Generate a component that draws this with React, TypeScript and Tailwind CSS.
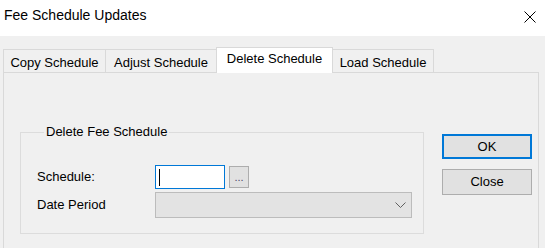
import React from "react";

const tabs = [
  { label: "Copy Schedule", w: "w-[103px]", border: "border-l border-t border-r" },
  { label: "Adjust Schedule", w: "w-[110px]", border: "border-t" },
  { label: "Delete Schedule", w: "w-[117px]", border: "", active: true },
  { label: "Load Schedule", w: "w-[101px]", border: "border-t border-r" },
];

export default function App() {
  return (
    <div className="w-[545px] h-[248px] overflow-hidden bg-[#f0f0f0] font-['Liberation_Sans',Arial,sans-serif] text-[13px] text-black">
      {/* title bar */}
      <div className="h-9 bg-white flex items-start justify-between">
        <span className="pl-[4px] pt-[7px] text-[14px] leading-4 text-[#000]">Fee Schedule Updates</span>
        <svg width="12" height="12" viewBox="0 0 12 12" className="mt-[11px] mr-[9px]">
          <path d="M0.5 0.5 L11.5 11.5 M11.5 0.5 L0.5 11.5" stroke="#000" strokeWidth="1" />
        </svg>
      </div>

      <div className="pl-[3px] pt-[10px]">
        {/* tab strip */}
        <div className="flex items-end h-[26px]">
          {tabs.map((t) =>
            t.active ? (
              <div
                key={t.label}
                className={`${t.w} h-[26px] -mb-px relative z-10 bg-white border-l border-t border-r border-[#d9d9d9] flex justify-center pt-[3px] leading-4`}
              >
                {t.label}
              </div>
            ) : (
              <div
                key={t.label}
                className={`${t.w} h-[23px] ${t.border} border-[#d9d9d9] bg-[#f0f0f0] flex justify-center pt-[5px] leading-4`}
              >
                {t.label}
              </div>
            )
          )}
        </div>

        {/* tab panel */}
        <div className="w-[536px] h-[200px] border border-[#d9d9d9] bg-[#f0f0f0] flex items-start pl-4 pt-[52px]">
          <fieldset className="w-[404px] border border-[#dcdcdc] pl-4 pb-[15px]">
            <legend className="ml-[7px] px-[2px] leading-[14px]">Delete Fee Schedule</legend>
            <div className="pt-[26px] flex flex-col gap-[3px]">
              <div className="flex items-center h-[24px]">
                <span className="w-[118px]">Schedule:</span>
                <div className="w-[70px] h-[24px] bg-white border border-[#0078d7] flex items-center pl-[3px]">
                  <span className="block w-px h-[17px] bg-black" />
                </div>
                <div className="ml-[4px] w-[20px] h-[22px] bg-[#e1e1e1] border border-[#adadad] flex items-end justify-center pb-[4px] text-[11px] leading-[11px] text-[#4a4a6a]">
                  ...
                </div>
              </div>
              <div className="flex items-center h-[26px]">
                <span className="w-[118px]">Date Period</span>
                <div className="w-[257px] h-[26px] bg-[#e3e3e3] border border-[#bcbcbc] flex items-center justify-end pr-[5px]">
                  <svg width="11" height="6" viewBox="0 0 11 6">
                    <path d="M0.5 0.5 L5.5 5.5 L10.5 0.5" fill="none" stroke="#606060" strokeWidth="1" />
                  </svg>
                </div>
              </div>
            </div>
          </fieldset>

          <div className="ml-[18px] mt-[9px] flex flex-col gap-[10px]">
            <button className="w-[90px] h-[25px] bg-[#e1e1e1] border-2 border-[#0078d7] leading-4">OK</button>
            <button className="w-[90px] h-[26px] bg-[#e1e1e1] border border-[#adadad] leading-4">Close</button>
          </div>
        </div>
      </div>
    </div>
  );
}
